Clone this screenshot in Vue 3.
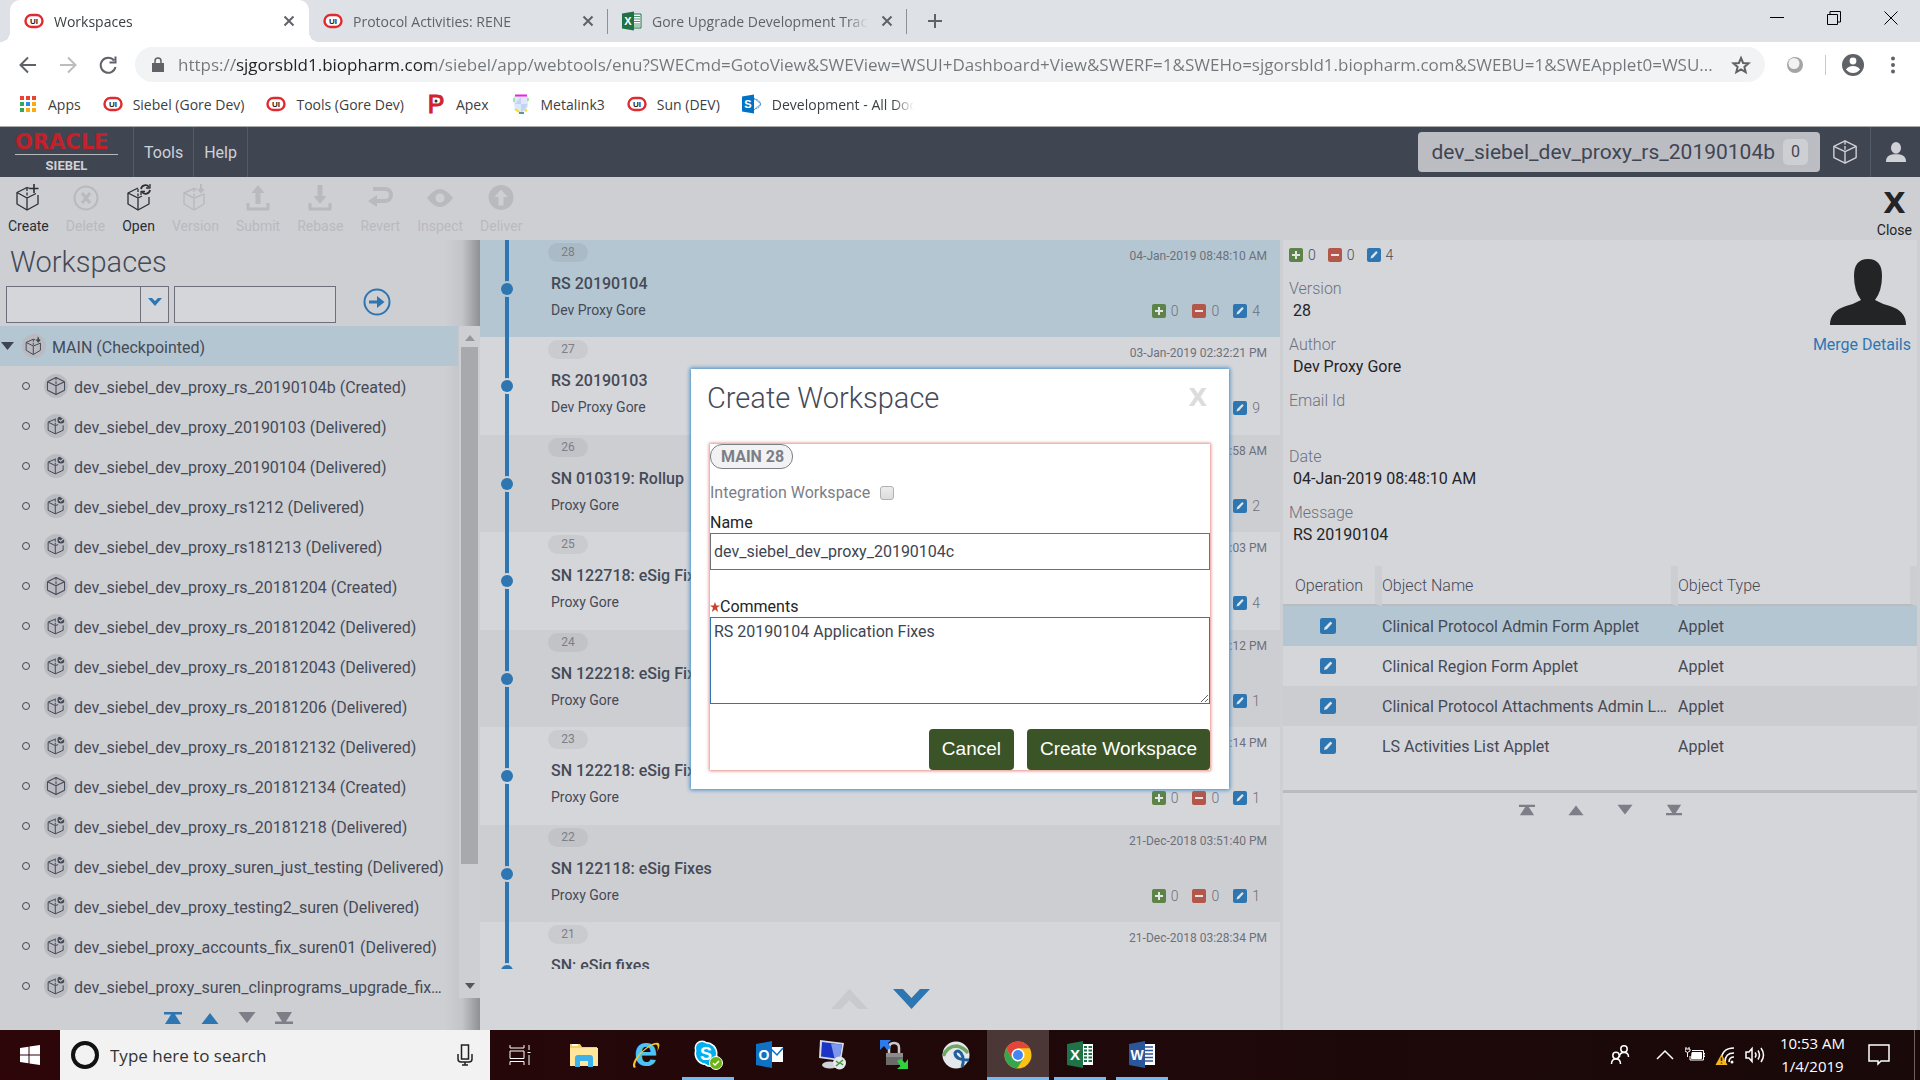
<script setup>
import { ref } from 'vue'

const tabs = [
  { title: 'Workspaces', icon: 'ui', active: true },
  { title: 'Protocol Activities: RENE', icon: 'ui' },
  { title: 'Gore Upgrade Development Tracker', icon: 'sheet' }
]

const bookmarks = [
  { title: 'Apps', icon: 'apps' },
  { title: 'Siebel (Gore Dev)', icon: 'ui' },
  { title: 'Tools (Gore Dev)', icon: 'ui' },
  { title: 'Apex', icon: 'apex' },
  { title: 'Metalink3', icon: 'metalink' },
  { title: 'Sun (DEV)', icon: 'ui' },
  { title: 'Development - All Documents', icon: 'sharepoint' }
]

const url = ref(
  'https://sjgorsbld1.biopharm.com/siebel/app/webtools/enu?SWECmd=GotoView&SWEView=WSUI+Dashboard+View&SWERF=1&SWEHo=sjgorsbld1.biopharm.com&SWEBU=1&SWEApplet0=WSU...'
)

const tools = [
  { label: 'Create', icon: 'cube-plus', enabled: true },
  { label: 'Delete', icon: 'delete' },
  { label: 'Open', icon: 'cube-open', enabled: true },
  { label: 'Version', icon: 'cube-down' },
  { label: 'Submit', icon: 'submit' },
  { label: 'Rebase', icon: 'rebase' },
  { label: 'Revert', icon: 'revert' },
  { label: 'Inspect', icon: 'inspect' },
  { label: 'Deliver', icon: 'deliver' }
]

const workspaces = [
  { name: 'dev_siebel_dev_proxy_rs_20190104b', status: 'Created' },
  { name: 'dev_siebel_dev_proxy_20190103', status: 'Delivered' },
  { name: 'dev_siebel_dev_proxy_20190104', status: 'Delivered' },
  { name: 'dev_siebel_dev_proxy_rs1212', status: 'Delivered' },
  { name: 'dev_siebel_dev_proxy_rs181213', status: 'Delivered' },
  { name: 'dev_siebel_dev_proxy_rs_20181204', status: 'Created' },
  { name: 'dev_siebel_dev_proxy_rs_201812042', status: 'Delivered' },
  { name: 'dev_siebel_dev_proxy_rs_201812043', status: 'Delivered' },
  { name: 'dev_siebel_dev_proxy_rs_20181206', status: 'Delivered' },
  { name: 'dev_siebel_dev_proxy_rs_201812132', status: 'Delivered' },
  { name: 'dev_siebel_dev_proxy_rs_201812134', status: 'Created' },
  { name: 'dev_siebel_dev_proxy_rs_20181218', status: 'Delivered' },
  { name: 'dev_siebel_dev_proxy_suren_just_testing', status: 'Delivered' },
  { name: 'dev_siebel_dev_proxy_testing2_suren', status: 'Delivered' },
  { name: 'dev_siebel_proxy_accounts_fix_suren01', status: 'Delivered' },
  { name: 'dev_siebel_proxy_suren_clinprograms_upgrade_fixes', status: 'Delivered' }
]

const versions = [
  { id: 28, title: 'RS 20190104', author: 'Dev Proxy Gore', date: '04-Jan-2019 08:48:10 AM', edits: 4 },
  { id: 27, title: 'RS 20190103', author: 'Dev Proxy Gore', date: '03-Jan-2019 02:32:21 PM', edits: 9 },
  { id: 26, title: 'SN 010319: Rollup', author: 'Proxy Gore', date: '03-Jan-2019 11:20:58 AM', edits: 2 },
  { id: 25, title: 'SN 122718: eSig Fixes', author: 'Proxy Gore', date: '27-Dec-2018 04:10:03 PM', edits: 4 },
  { id: 24, title: 'SN 122218: eSig Fixes', author: 'Proxy Gore', date: '22-Dec-2018 05:12:12 PM', edits: 1 },
  { id: 23, title: 'SN 122218: eSig Fixes', author: 'Proxy Gore', date: '22-Dec-2018 03:40:14 PM', edits: 1 },
  { id: 22, title: 'SN 122118: eSig Fixes', author: 'Proxy Gore', date: '21-Dec-2018 03:51:40 PM', edits: 1 },
  { id: 21, title: 'SN: eSig fixes', author: 'Proxy Gore', date: '21-Dec-2018 03:28:34 PM', edits: 1 }
]

const details = [
  { label: 'Version', value: '28' },
  { label: 'Author', value: 'Dev Proxy Gore' },
  { label: 'Email Id', value: '' },
  { label: 'Date', value: '04-Jan-2019 08:48:10 AM' },
  { label: 'Message', value: 'RS 20190104' }
]

const objects = [
  { name: 'Clinical Protocol Admin Form Applet', type: 'Applet' },
  { name: 'Clinical Region Form Applet', type: 'Applet' },
  { name: 'Clinical Protocol Attachments Admin List Applet', type: 'Applet' },
  { name: 'LS Activities List Applet', type: 'Applet' }
]

const pagers = ['first', 'prev', 'next', 'last']

const taskbarApps = [
  { icon: 'explorer', label: 'File Explorer' },
  { icon: 'ie', label: 'Internet Explorer' },
  { icon: 'skype', label: 'Skype', running: true },
  { icon: 'outlook', label: 'Outlook' },
  { icon: 'remote', label: 'Remote Desktop' },
  { icon: 'winscp', label: 'WinSCP' },
  { icon: 'anyconnect', label: 'AnyConnect' },
  { icon: 'chrome', label: 'Chrome', running: true, focused: true },
  { icon: 'excel', label: 'Excel', running: true },
  { icon: 'word', label: 'Word', running: true }
]

const workspaceName = ref('dev_siebel_dev_proxy_20190104c')
const comments = ref('RS 20190104 Application Fixes')
const integration = ref(false)
const statusFilter = ref('')
const searchText = ref('')
</script>

<template>
  <div class="desktop">
    <svg class="sprite" aria-hidden="true">
      <defs>
        <symbol id="ui" viewBox="0 0 20 20">
          <rect x="1.500" y="4" width="17" height="12" rx="6" fill="#fff" stroke="#e02a2f" stroke-width="2.400" />
          <text x="10" y="13" font-family="Liberation Sans, sans-serif" font-size="8" font-weight="bold" text-anchor="middle" fill="#222">UI</text>
        </symbol>
        <symbol id="sheet" viewBox="0 0 20 20">
          <path d="M11 3h8v14h-8z" fill="#fff" stroke="#1f7246" />
          <path d="M12 5.500h6M12 8h6M12 10.500h6M12 13h6M12 15h6" stroke="#4d9a70" />
          <path d="M0 2.500L12 0.500v19L0 17.500z" fill="#1f7246" />
          <text x="6" y="14" font-family="Liberation Sans, sans-serif" font-size="11" font-weight="bold" text-anchor="middle" fill="#fff">X</text>
        </symbol>
        <symbol id="apps" viewBox="0 0 20 20">
          <path d="M2 2h4v4H2zM8 2h4v4H8zM14 2h4v4h-4z" fill="#ea4335" />
          <path d="M2 8h4v4H2zM2 14h4v4H2z" fill="#34a853" />
          <path d="M8 8h4v4H8z" fill="#2a8af0" />
          <path d="M14 8h4v4h-4zM8 14h4v4H8zM14 14h4v4h-4z" fill="#fbab0a" />
        </symbol>
        <symbol id="apex" viewBox="0 0 20 20">
          <text x="10" y="19" font-family="Liberation Sans, sans-serif" font-size="25" text-anchor="middle" fill="#d3222a" stroke="#d3222a">P</text>
          <circle cx="10" cy="7" r="1.500" fill="#333" />
        </symbol>
        <symbol id="metalink" viewBox="0 0 20 20">
          <path d="M3 2h14v9q0 5-7 8q-7-3-7-8z" fill="#dfe7fb" />
          <path d="M10 3v7H4M10 10h6q0 5-6 8z" fill="#c3d2f6" />
          <path d="M4 1.500h12" stroke="#ee22dd" stroke-width="2" />
          <path d="M3 4v4M17 4v3" stroke="#8ee08a" stroke-width="1.500" />
          <path d="M4 15l4 3" stroke="#e9e21b" stroke-width="2" />
          <path d="M8 19h5" stroke="#2c6f86" stroke-width="1.500" />
          <path d="M14 17l2-1" stroke="#e9e21b" stroke-width="2" />
        </symbol>
        <symbol id="sharepoint" viewBox="0 0 20 20">
          <circle cx="14" cy="10" r="4.500" fill="none" stroke="#4d9bd8" stroke-dasharray="2 1" />
          <path d="M12 4l7 6l-7 6" fill="none" stroke="#4d9bd8" />
          <path d="M0 2.500L12 0.500v19L0 17.500z" fill="#0072c6" />
          <text x="6" y="14" font-family="Liberation Sans, sans-serif" font-size="11" font-weight="bold" text-anchor="middle" fill="#fff">S</text>
        </symbol>

        <symbol id="cube" viewBox="0 0 28 28">
          <g fill="none" stroke="currentColor" stroke-width="1.500" stroke-linejoin="round">
            <path d="M14 2L26 8V20L14 26L2 20V8z" />
            <path d="M2 8L14 13.500L26 8M14 13.500V26" />
            <path d="M14 2v11" stroke-dasharray="4 1.500" />
          </g>
        </symbol>
        <symbol id="cube-plus" viewBox="0 0 28 28">
          <g fill="none" stroke="currentColor" stroke-width="1.300" stroke-linejoin="round">
            <path d="M16 4.500L13 3.500L3 8.500V20L13 26L24 20V11" />
            <path d="M3 8.500L13 14L22 9.500M13 14V26" />
            <path d="M13 4v10" stroke-dasharray="3 1.500" />
            <path d="M20 0v9M15.500 4.500h9" stroke-width="1.600" />
          </g>
        </symbol>
        <symbol id="cube-open" viewBox="0 0 28 28">
          <g fill="none" stroke="currentColor" stroke-width="1.300" stroke-linejoin="round">
            <path d="M13 4L3 9V20L13 26L24 20V13" />
            <path d="M3 9L13 14L17 12M13 14V26" />
            <path d="M13 5v9" stroke-dasharray="3 1.500" />
            <path d="M16 5a4.500 4.500 0 0 1 8-2M25 6a4.500 4.500 0 0 1-8 2" stroke-width="1.800" />
            <path d="M25 0v4h-4M16 11V7.500h4" />
          </g>
        </symbol>
        <symbol id="cube-down" viewBox="0 0 28 28">
          <g fill="none" stroke="currentColor" stroke-width="1.400" stroke-linejoin="round">
            <path d="M16 5.500L13 4.500L3 9V20L13 26L23 20V10" />
            <path d="M3 9L13 14L23 10M13 14V26" />
            <path d="M13 5v9" stroke-dasharray="3 1.500" />
            <path d="M20 0v8M17.500 5l2.500 3l2.500-3" stroke-width="2" />
          </g>
        </symbol>
        <symbol id="cube-check" viewBox="0 0 28 28">
          <g fill="none" stroke="currentColor" stroke-width="1.400" stroke-linejoin="round">
            <path d="M14 4L3 8.500V20L13 25L24 20V13" />
            <path d="M3 8.500L13 13.500L17 12M13 13.500V25" />
            <path d="M13 5v8" stroke-dasharray="3 1.500" />
          </g>
          <circle cx="21" cy="5.500" r="5" fill="currentColor" />
          <path d="M18.500 5.500l2 2l3.500-3.500" fill="none" stroke="#cfd0d4" stroke-width="1.500" />
        </symbol>
        <symbol id="delete" viewBox="0 0 28 28">
          <circle cx="14" cy="14" r="11.500" fill="none" stroke="currentColor" stroke-width="2" />
          <path d="M10 9l8 10M18 9l-8 10" stroke="currentColor" stroke-width="3" />
        </symbol>
        <symbol id="submit" viewBox="0 0 28 28">
          <path d="M4 19v6h20v-6" fill="none" stroke="currentColor" stroke-width="3" stroke-linejoin="round" />
          <path d="M14 1l6.500 8H16.500v11h-5V9H7.500z" fill="currentColor" />
        </symbol>
        <symbol id="rebase" viewBox="0 0 28 28">
          <path d="M4 19v6h20v-6" fill="none" stroke="currentColor" stroke-width="3" stroke-linejoin="round" />
          <path d="M14 20l6.500-8H16.500V1h-5v11H7.500z" fill="currentColor" />
        </symbol>
        <symbol id="revert" viewBox="0 0 28 28">
          <path d="M7 5h12a5 5 0 0 1 0 12h-9" fill="none" stroke="currentColor" stroke-width="4" />
          <path d="M2 17l9-6v12z" fill="currentColor" />
        </symbol>
        <symbol id="inspect" viewBox="0 0 28 28">
          <path d="M1 14Q8 5 14 5T27 14Q20 23 14 23T1 14zM14 9.500a4.500 4.500 0 1 0 0.100 0z" fill="currentColor" fill-rule="evenodd" />
        </symbol>
        <symbol id="deliver" viewBox="0 0 28 28">
          <path d="M14 1a12.500 12.500 0 1 0 0.100 0zM14 5.500l6.500 7.500h-4v8.500h-5V13h-4z" fill="currentColor" fill-rule="evenodd" />
        </symbol>
        <symbol id="user" viewBox="0 0 24 24">
          <ellipse cx="12" cy="7.500" rx="5.500" ry="6.500" fill="currentColor" />
          <path d="M1 23q0-8 8-8.500h6q8 .5 8 8.500z" fill="currentColor" />
        </symbol>

        <symbol id="added" viewBox="0 0 14 14">
          <rect width="14" height="14" rx="2" fill="#5e8348" />
          <path d="M7 3v8M3 7h8" stroke="#e4e6e6" stroke-width="2" />
        </symbol>
        <symbol id="removed" viewBox="0 0 14 14">
          <rect width="14" height="14" rx="2" fill="#b4574b" />
          <path d="M3 7h8" stroke="#e8e2e2" stroke-width="2" />
        </symbol>
        <symbol id="edited" viewBox="0 0 14 14">
          <rect width="14" height="14" rx="2" fill="#2d76b2" />
          <path d="M3.500 10.500l.7-2.500l5-5l1.500 1.500l-4.700 5.300z" fill="#dfe4e8" />
        </symbol>

        <symbol id="first" viewBox="0 0 18 12">
          <path d="M0 0h18v2.500h-7l6 9.500H1l6-9.500H0z" fill="currentColor" />
        </symbol>
        <symbol id="prev" viewBox="0 0 18 12">
          <path d="M9 1l8.500 11h-17z" fill="currentColor" />
        </symbol>
        <symbol id="next" viewBox="0 0 18 12">
          <path d="M9 11L17.500 0h-17z" fill="currentColor" />
        </symbol>
        <symbol id="last" viewBox="0 0 18 12">
          <path d="M1 0h16l-6 9.500h7V12H0V9.500h7z" fill="currentColor" />
        </symbol>

        <symbol id="explorer" viewBox="0 0 30 30">
          <path d="M1 4h10l2 3h15v19H1z" fill="#f5cf62" />
          <path d="M1 8h28v18H1z" fill="#ffe69a" />
          <path d="M3 4h6v2H3z" fill="#fff" />
          <path d="M6 27V18q0-3 3-3h12q3 0 3 3v9h-5v-6h-8v6z" fill="#3db2ea" />
        </symbol>
        <symbol id="ie" viewBox="0 0 30 30">
          <text x="15" y="26" font-family="Liberation Sans, sans-serif" font-size="42" font-weight="bold" text-anchor="middle" fill="#4cc3f3">e</text>
          <path d="M3 28q-4-5 7-16Q22 1 27.500 3Q30 5 26 12Q28 5 25 4.500Q18 5 9 15Q2 25 5 27z" fill="#f6c52c" />
        </symbol>
        <symbol id="skype" viewBox="0 0 30 30">
          <circle cx="9" cy="8" r="7.500" fill="#fff" />
          <circle cx="17" cy="19" r="8" fill="#fff" />
          <circle cx="13" cy="13.500" r="11.500" fill="#fff" />
          <circle cx="9" cy="8" r="6" fill="#00aff0" />
          <circle cx="17" cy="19" r="6.500" fill="#00aff0" />
          <circle cx="13" cy="13.500" r="10" fill="#00aff0" />
          <text x="13" y="20" font-family="Liberation Sans, sans-serif" font-size="18" font-weight="bold" text-anchor="middle" fill="#fff">S</text>
          <circle cx="23" cy="23" r="6.500" fill="#6bb313" stroke="#fff" />
          <path d="M20 23l2 2l4-4" fill="none" stroke="#fff" stroke-width="1.500" />
        </symbol>
        <symbol id="outlook" viewBox="0 0 30 30">
          <path d="M16 7h12v15H16z" fill="#fff" />
          <path d="M16 9l6 6l6-7" fill="none" stroke="#0072c6" stroke-width="1.500" />
          <path d="M1 4l16-3v27L1 25z" fill="#0f72c4" />
          <text x="9" y="20" font-family="Liberation Sans, sans-serif" font-size="14" font-weight="bold" text-anchor="middle" fill="#fff">O</text>
        </symbol>
        <symbol id="remote" viewBox="0 0 30 30">
          <path d="M3 0l24 3l-3 18l-22-3z" fill="#d8dbe2" />
          <path d="M5 2l20 2.500l-2.500 14.500L4 16.500z" fill="#1b35c4" />
          <path d="M14 3.500l11 1L22.500 19l-5-.500z" fill="#7d98ec" />
          <ellipse cx="13" cy="25" rx="8" ry="3.500" fill="#cfd2d8" />
          <circle cx="22.500" cy="23" r="6.500" fill="#e5e7ea" />
          <path d="M19 21l3 2.500l-3 2.500M26 20l-3 2.500l3 2.500" fill="none" stroke="#3e9b3a" stroke-width="1.500" />
        </symbol>
        <symbol id="winscp" viewBox="0 0 30 30">
          <path d="M10 14V8q0-5 5-5t5 5v6" fill="none" stroke="#c9c9c9" stroke-width="2.500" />
          <path d="M7 13h17v12H7z" fill="#6b6b6b" />
          <path d="M7 13h17v4H7z" fill="#8c8c8c" />
          <path d="M1 0h11L9 3l3 5l-4 2l-3-4l-4 4z" fill="#2c7be8" />
          <path d="M29 29H18l3.500-3L18 21l4-2l4 4l3-4z" fill="#2fd23c" />
        </symbol>
        <symbol id="anyconnect" viewBox="0 0 30 30">
          <circle cx="15" cy="15" r="13.500" fill="#e4e8ea" />
          <path d="M2.500 16Q6 6 16 6q6 1 11 7" fill="none" stroke="#6fa663" stroke-width="3.500" />
          <path d="M28 20Q14 20 14 13q2-4 6 0q4 6 1 14" fill="none" stroke="#1f5f9c" stroke-width="3" />
        </symbol>
        <symbol id="chrome" viewBox="0 0 30 30">
          <circle cx="15" cy="15" r="13.500" fill="#fbc116" />
          <path d="M3.300 8.300A13.500 13.500 0 0 1 26.700 8.300H15L9 18.500z" fill="#e5443a" />
          <path d="M3.300 8.300A13.500 13.500 0 0 0 14 28.500L20.500 18.500L15 15L9 18.500z" fill="#35a551" />
          <circle cx="15" cy="15" r="6.500" fill="#fff" />
          <circle cx="15" cy="15" r="5" fill="#4285f4" />
        </symbol>
        <symbol id="excel" viewBox="0 0 30 30">
          <path d="M14 4h14v21H14z" fill="#fff" />
          <path d="M19 7h3M23.500 7H27M19 10.500h3M23.500 10.500H27M19 14h3M23.500 14H27M19 17.500h3M23.500 17.500H27M19 21h3M23.500 21H27" stroke="#1f7246" stroke-width="2" />
          <path d="M2 4l16-3v27L2 25z" fill="#1f7246" />
          <text x="10" y="20" font-family="Liberation Sans, sans-serif" font-size="15" font-weight="bold" text-anchor="middle" fill="#fff">X</text>
        </symbol>
        <symbol id="word" viewBox="0 0 30 30">
          <path d="M14 4h14v21H14z" fill="#fff" />
          <path d="M18 7h8M18 10.500h8M18 14h8M18 17.500h8M18 21h8" stroke="#2b579a" stroke-width="1.500" />
          <path d="M2 4l16-3v27L2 25z" fill="#2b579a" />
          <text x="10" y="20" font-family="Liberation Sans, sans-serif" font-size="14" font-weight="bold" text-anchor="middle" fill="#fff">W</text>
        </symbol>
      </defs>
    </svg>

    <header class="browser">
      <div class="tab-strip">
        <div v-for="tab in tabs" :key="tab.title" class="tab" :class="{ active: tab.active }">
          <svg class="favicon"><use :href="'#' + tab.icon" /></svg>
          <span class="tab-title">{{ tab.title }}</span>
          <button class="tab-close" aria-label="Close tab">
            <svg viewBox="0 0 12 12"><path d="M1.500 1.500l9 9M10.500 1.500l-9 9" /></svg>
          </button>
        </div>
        <button class="new-tab" aria-label="New tab">
          <svg viewBox="0 0 16 16"><path d="M8 1v14M1 8h14" /></svg>
        </button>
        <div class="window-buttons">
          <button aria-label="Minimize"><svg viewBox="0 0 14 14"><path d="M0 6.500h14" /></svg></button>
          <button aria-label="Restore"><svg viewBox="0 0 14 14"><path d="M.5 3.500h10v10H.5zM3 3V.500h10.500V11H11" /></svg></button>
          <button aria-label="Close"><svg viewBox="0 0 14 14"><path d="M.5 .5l13 13M13.500 .5l-13 13" /></svg></button>
        </div>
      </div>

      <div class="address-row">
        <button class="nav-button" aria-label="Back">
          <svg viewBox="0 0 20 20"><path d="M18 10H3M10 2.500L2.500 10L10 17.500" /></svg>
        </button>
        <button class="nav-button muted" aria-label="Forward">
          <svg viewBox="0 0 20 20"><path d="M2 10h15M10 2.500l7.500 7.500l-7.500 7.500" /></svg>
        </button>
        <button class="nav-button" aria-label="Reload">
          <svg viewBox="0 0 20 20"><path d="M16 5.500A7.500 7.500 0 1 0 17.500 12M17.500 1.500v6h-6" /></svg>
        </button>
        <div class="address">
          <svg class="lock" viewBox="0 0 12 16">
            <path d="M0 6h12v9H0z" fill="#5f6368" />
            <path d="M3 7V4q0-3 3-3t3 3v3" fill="none" stroke="#5f6368" stroke-width="1.500" />
          </svg>
          <input v-model="url" class="url" type="text" aria-label="Address" />
          <svg class="star" viewBox="0 0 20 20">
            <path d="M10 3l2.100 5l5.400 .4l-4.100 3.500l1.300 5.200L10 14.300l-4.700 2.800l1.300-5.200L2.500 8.400l5.400-.4z" />
          </svg>
        </div>
        <svg class="extension" viewBox="0 0 20 20">
          <circle cx="10" cy="10" r="8" fill="#a4a4a4" />
          <circle cx="9" cy="8.500" r="5.500" fill="#f2f2f2" />
        </svg>
        <span class="rule"></span>
        <button class="nav-button" aria-label="Profile">
          <svg class="avatar" viewBox="0 0 22 22">
            <circle cx="11" cy="11" r="11" fill="#5f6368" />
            <circle cx="11" cy="7" r="3.400" fill="#fff" />
            <path d="M4 15.500q2-3.500 7-3.500t7 3.500q-3 3.500-7 3.500t-7-3.500z" fill="#fff" />
          </svg>
        </button>
        <button class="nav-button" aria-label="Menu">
          <svg class="dots" viewBox="0 0 20 20">
            <circle cx="10" cy="3.500" r="2" /><circle cx="10" cy="10" r="2" /><circle cx="10" cy="16.500" r="2" />
          </svg>
        </button>
      </div>

      <nav class="bookmarks">
        <a v-for="mark in bookmarks" :key="mark.title" href="#">
          <svg class="favicon"><use :href="'#' + mark.icon" /></svg>
          <span>{{ mark.title }}</span>
        </a>
      </nav>
    </header>

    <div class="siebel">
      <div class="banner">
        <div class="logo">
          <span class="oracle">ORACLE</span>
          <span class="product">SIEBEL</span>
        </div>
        <button class="menu">Tools</button>
        <button class="menu">Help</button>
        <div class="banner-right">
          <span class="current">dev_siebel_dev_proxy_rs_20190104b <b>0</b></span>
          <button class="banner-icon" aria-label="Workspace"><svg><use href="#cube" /></svg></button>
          <button class="banner-icon user" aria-label="User"><svg><use href="#user" /></svg></button>
        </div>
      </div>

      <div class="toolbar">
        <button v-for="tool in tools" :key="tool.label" :disabled="!tool.enabled">
          <svg><use :href="'#' + tool.icon" /></svg>
          {{ tool.label }}
        </button>
        <button class="close-view"><b>X</b>Close</button>
      </div>

      <main class="columns">
        <section class="explorer">
          <h1>Workspaces</h1>
          <div class="query">
            <div class="combo">
              <input v-model="statusFilter" type="text" aria-label="Field" />
              <button aria-label="Show fields">
                <svg viewBox="0 0 16 10"><path d="M1 1h4l3 3l3-3h4L8 9z" fill="#2d76b2" /></svg>
              </button>
            </div>
            <input v-model="searchText" class="search-value" type="text" aria-label="Value" />
            <button class="go" aria-label="Go">
              <svg viewBox="0 0 28 28">
                <circle cx="14" cy="14" r="12.500" fill="none" stroke="#2d76b2" stroke-width="2" />
                <path d="M6 12.500h8V8l7.500 6l-7.500 6v-4.500H6z" fill="#2d76b2" />
              </svg>
            </button>
          </div>
          <div class="tree-wrap">
            <ul class="tree">
              <li class="root">
                <svg class="caret" viewBox="0 0 13 8"><path d="M0 0h13L6.500 8z" fill="#404552" /></svg>
                <svg class="badge"><use href="#cube-down" /></svg>
                <span class="name">MAIN (Checkpointed)</span>
              </li>
              <li v-for="item in workspaces" :key="item.name">
                <span class="bullet"></span>
                <svg class="badge"><use :href="item.status === 'Created' ? '#cube' : '#cube-check'" /></svg>
                <span class="name">{{ item.name }} ({{ item.status }})</span>
              </li>
            </ul>
            <div class="scrollbar">
              <svg viewBox="0 0 10 6"><path d="M5 0l5 6H0z" fill="#96979a" /></svg>
              <div class="track"><div class="thumb"></div></div>
              <svg viewBox="0 0 10 6"><path d="M5 6l5-6H0z" fill="#55565a" /></svg>
            </div>
          </div>
          <div class="pager tree-pager">
            <button v-for="(pager, i) in pagers" :key="pager" :class="{ on: i < 2 }" :aria-label="pager">
              <svg><use :href="'#' + pager" /></svg>
            </button>
          </div>
        </section>

        <section class="history">
          <ol class="timeline">
            <li v-for="(version, i) in versions" :key="version.id" :class="{ selected: i === 0 }">
              <div class="entry">
                <span class="number">{{ version.id }}</span>
                <h2>{{ version.title }}</h2>
                <p>{{ version.author }}</p>
              </div>
              <div class="stamp">
                <time>{{ version.date }}</time>
                <div class="counts">
                  <svg><use href="#added" /></svg><span>0</span>
                  <svg><use href="#removed" /></svg><span>0</span>
                  <svg><use href="#edited" /></svg><span>{{ version.edits }}</span>
                </div>
              </div>
            </li>
          </ol>
          <div class="steps">
            <button aria-label="Newer"><svg viewBox="0 0 37 20"><path d="M0 20L18.500 0L37 20H27L18.500 11L10 20z" fill="#c9cace" /></svg></button>
            <button aria-label="Older"><svg viewBox="0 0 37 20"><path d="M0 0L18.500 20L37 0H27L18.500 9L10 0z" fill="#2d76b2" /></svg></button>
          </div>
        </section>

        <section class="details">
          <div class="summary">
            <div>
              <div class="counts">
                <svg><use href="#added" /></svg><span>0</span>
                <svg><use href="#removed" /></svg><span>0</span>
                <svg><use href="#edited" /></svg><span>4</span>
              </div>
              <dl>
                <template v-for="row in details" :key="row.label">
                  <dt>{{ row.label }}</dt>
                  <dd>{{ row.value }}</dd>
                </template>
              </dl>
            </div>
            <div class="person">
              <svg viewBox="0 0 76 66">
                <path d="M38 0Q52 0 52 17Q52 32 45 41Q52 45 60 47Q76 52 76 66H0Q0 52 16 47Q24 45 31 41Q24 32 24 17Q24 0 38 0z" fill="#232426" />
              </svg>
              <a href="#">Merge Details</a>
            </div>
          </div>
          <table>
            <thead>
              <tr><th class="operation">Operation</th><th class="object">Object Name</th><th>Object Type</th></tr>
            </thead>
            <tbody>
              <tr v-for="object in objects" :key="object.name">
                <td><svg><use href="#edited" /></svg></td>
                <td>{{ object.name }}</td>
                <td>{{ object.type }}</td>
              </tr>
            </tbody>
          </table>
          <div class="pager table-pager">
            <button v-for="pager in pagers" :key="pager" :aria-label="pager">
              <svg><use :href="'#' + pager" /></svg>
            </button>
          </div>
        </section>
      </main>

      <div class="overlay">
        <div class="dialog" role="dialog" aria-labelledby="dialog-title">
          <div class="dialog-head">
            <h2 id="dialog-title">Create Workspace</h2>
            <button aria-label="Close dialog">X</button>
          </div>
          <form @submit.prevent>
            <span class="parent">MAIN 28</span>
            <div class="check-row">
              <label for="integration">Integration Workspace</label>
              <input id="integration" v-model="integration" type="checkbox" />
            </div>
            <label for="name">Name</label>
            <input id="name" v-model="workspaceName" type="text" />
            <label class="required" for="comments">
              <svg viewBox="0 0 10 10"><path d="M5 0l1.300 3.500H10L7 5.800L8.200 10L5 7.500L1.800 10L3 5.800L0 3.500h3.700z" fill="#c8432f" /></svg>Comments
            </label>
            <textarea id="comments" v-model="comments"></textarea>
            <div class="actions">
              <button type="button">Cancel</button>
              <button type="submit">Create Workspace</button>
            </div>
          </form>
        </div>
      </div>
    </div>

    <footer class="taskbar">
      <button class="start" aria-label="Start">
        <svg viewBox="0 0 20 20"><path d="M0 3l8.500-1.200v7.700H0zM9.500 1.600L20 0v9.500H9.500zM0 10.500h8.500v7.700L0 17zM9.500 10.500H20V20L9.500 18.400z" fill="#fff" /></svg>
      </button>
      <div class="cortana">
        <span class="ring"></span>
        <input type="text" placeholder="Type here to search" aria-label="Search" />
        <svg viewBox="0 0 16 22">
          <path d="M4.500 1h7v14h-7zM1 10v5q0 3 3 3h8q3 0 3-3v-5M8 18v3M5 21h6" fill="none" stroke="#222" stroke-width="1.500" />
        </svg>
      </div>
      <button class="task-view" aria-label="Task View">
        <svg viewBox="0 0 22 20"><path d="M1 0v3h14V0M1 20v-3.500h14V20M1 6h14v7.500H1zM20 0v5M20 10v10M18.500 7.500h3" /></svg>
      </button>
      <button
        v-for="app in taskbarApps"
        :key="app.icon"
        class="app"
        :class="{ running: app.running, focused: app.focused }"
        :aria-label="app.label"
      >
        <svg><use :href="'#' + app.icon" /></svg>
      </button>
      <div class="tray">
        <svg class="people" viewBox="0 0 20 20">
          <circle cx="14" cy="4" r="3.200" /><path d="M9.500 12q0-4.500 4.500-4.500t4.500 4.500" />
          <circle cx="6" cy="10.500" r="3.200" /><path d="M1.500 19q0-5 4.500-5t4.500 5" />
        </svg>
        <svg viewBox="0 0 20 20"><path d="M2 14l8-8l8 8" /></svg>
        <svg class="battery" viewBox="0 0 20 20">
          <path d="M7 7.500h9.500v6H6.500z" fill="#fff" /><path d="M7 5.500h11.500v9.500H5V11M18.500 8.500h1.500v3h-1.500M0 4h5v2q-2.500 3-5 0zM1 2v2M4 2v2M2.500 7.500V12" />
        </svg>
        <svg viewBox="0 0 20 20">
          <path d="M6 17Q6 3 19 3M10 17q0-9 9-9M14 17q0-5 5-5" /><circle cx="17" cy="17" r="1.500" fill="#fff" stroke="none" />
          <path d="M6.500 9l6 11H.5z" fill="#f7b516" stroke="none" /><path d="M6.500 12.500v3.500M6.500 17.500v1" stroke="#222" />
        </svg>
        <svg viewBox="0 0 20 20"><path d="M1 7h3l3-3.500v13L4 13H1zM10 7.500q2 2.500 0 5M13 5.500q3 4.500 0 9M16 3q5 7 0 14" /></svg>
        <div class="clock"><span>10:53 AM</span><span>1/4/2019</span></div>
        <svg class="notes" viewBox="0 0 22 22"><path d="M1 1h20v16h-8l-3 3v-3H1z" /></svg>
      </div>
    </footer>
  </div>
</template>

<style>
body {
  margin: 0;
}
</style>

<style scoped>
* {
  box-sizing: border-box;
}

.desktop {
  display: flex;
  flex-direction: column;
  height: 100vh;
  overflow: hidden;
  font-family: Roboto, 'Liberation Sans', sans-serif;
  font-size: 16px;
  color: #454a57;
}

.sprite {
  position: absolute;
  width: 0;
  height: 0;
}

button {
  padding: 0;
  border: 0;
  background: none;
  font: inherit;
  color: inherit;
}

h1,
h2,
p,
ul,
ol,
dl,
dd {
  margin: 0;
  padding: 0;
  list-style: none;
}

svg {
  display: block;
  flex: none;
}

/* browser */
.browser,
.taskbar {
  flex: none;
  font-family: 'Open Sans', 'Noto Sans', sans-serif;
}

.tab-strip {
  display: flex;
  height: 42px;
  padding-left: 10px;
  background: #dee1e6;
  font-size: 14px;
}

.tab {
  position: relative;
  display: flex;
  align-items: center;
  gap: 10px;
  width: 299px;
  padding: 0 11px 0 14px;
  color: #5f6368;
}

.tab::after {
  content: '';
  position: absolute;
  right: 0;
  width: 1px;
  height: 25px;
  background: #8d9196;
}

.tab.active {
  border-radius: 10px 10px 0 0;
  background: #fff;
  color: #3c4043;
}

.tab.active::before,
.tab.active::after {
  content: '';
  position: absolute;
  bottom: 0;
  width: 10px;
  height: 10px;
}

.tab.active::before {
  left: -10px;
  background: radial-gradient(circle at 0 0, transparent 10px, #fff 10px);
}

.tab.active::after {
  right: -10px;
  background: radial-gradient(circle at 100% 0, transparent 10px, #fff 10px);
}

.favicon {
  width: 20px;
  height: 20px;
}

.tab-title {
  flex: 1;
  overflow: hidden;
  white-space: nowrap;
  mask-image: linear-gradient(to right, #000 90%, transparent);
}

.tab-close {
  display: grid;
  place-items: center;
  width: 18px;
  height: 18px;
}

.tab-close svg {
  width: 12px;
  height: 12px;
  stroke: #5f6368;
  stroke-width: 2;
}

.new-tab {
  width: 56px;
  display: grid;
  place-items: center;
}

.new-tab svg {
  width: 16px;
  height: 16px;
  stroke: #5f6368;
  stroke-width: 2;
}

.window-buttons {
  display: flex;
  height: 36px;
  margin: 0 1px 0 auto;
}

.window-buttons button {
  display: grid;
  place-items: center;
  width: 57px;
}

.window-buttons svg {
  width: 14px;
  height: 14px;
  fill: none;
  stroke: #000;
}

.address-row {
  display: flex;
  align-items: center;
  height: 45px;
  padding: 0 7px 0 8px;
  background: #fff;
}

.nav-button {
  display: grid;
  place-items: center;
  width: 40px;
  height: 40px;
}

.nav-button svg {
  width: 20px;
  height: 20px;
  fill: none;
  stroke: #5f6368;
  stroke-width: 2;
}

.nav-button.muted svg {
  stroke: #babcbe;
}

.nav-button .avatar {
  width: 22px;
  height: 22px;
  stroke: none;
}

.nav-button .dots {
  fill: #5f6368;
  stroke: none;
}

.address {
  display: flex;
  align-items: center;
  flex: 1;
  height: 35px;
  margin-left: 7px;
  padding: 0 14px 0 17px;
  border-radius: 18px;
  background: #f1f3f4;
}

.lock {
  width: 12px;
  height: 16px;
}

.url {
  flex: 1;
  min-width: 0;
  height: 30px;
  margin: 0 12px 0 14px;
  padding: 0;
  border: 0;
  outline: 0;
  font: inherit;
  font-size: 17px;
  color: transparent;
  background: linear-gradient(to right, #72777c 57px, #202124 57px, #202124 254px, #72777c 254px);
  background-clip: text;
}

.star {
  width: 20px;
  height: 20px;
  fill: none;
  stroke: #5f6368;
  stroke-width: 2;
}

.extension {
  width: 20px;
  height: 20px;
  margin-left: 20px;
}

.rule {
  width: 1px;
  height: 20px;
  margin: 0 7px 0 20px;
  background: #c8cacd;
}

.bookmarks {
  display: flex;
  align-items: center;
  gap: 22px;
  height: 40px;
  padding: 0 18px 5px;
  border-bottom: 1px solid #a9abad;
  background: #fff;
  font-size: 14px;
}

.bookmarks a {
  display: flex;
  align-items: center;
  gap: 10px;
  color: #3c4043;
  text-decoration: none;
}

.bookmarks a:last-child span {
  width: 142px;
  overflow: hidden;
  white-space: nowrap;
  mask-image: linear-gradient(to right, #000 85%, transparent);
}

/* application */
.siebel {
  position: relative;
  display: flex;
  flex-direction: column;
  flex: 1;
  min-height: 0;
  background: #cecfd3;
}

.banner {
  display: flex;
  flex: none;
  height: 50px;
  background: #404552;
  color: #d0d1d6;
}

.logo {
  display: flex;
  flex-direction: column;
  width: 134px;
  padding: 4px 15px 0;
  border-right: 1px solid #545966;
}

.oracle {
  height: 24px;
  border-bottom: 1px solid #b8b9bd;
  font: bold 21px/22px 'DejaVu Sans', sans-serif;
  color: #c4202a;
}

.product {
  font-size: 13px;
  font-weight: 700;
  line-height: 22px;
  text-align: center;
}

.menu {
  padding: 0 10px;
  border-right: 1px solid #545966;
}

.banner-right {
  display: flex;
  align-items: center;
  margin-left: auto;
}

.current {
  display: flex;
  align-items: center;
  gap: 8px;
  height: 40px;
  padding: 0 12px 0 13px;
  border-radius: 4px;
  background: #bcbdc2;
  color: #404552;
  font-size: 21px;
}

.current b {
  width: 25px;
  border-radius: 5px;
  background: #cecfd3;
  font-size: 16px;
  font-weight: 400;
  line-height: 26px;
  text-align: center;
}

.banner-icon {
  display: grid;
  place-items: center;
  width: 50px;
  height: 50px;
}

.banner-icon svg {
  width: 26px;
  height: 26px;
}

.banner-icon.user {
  border-left: 1px solid #545966;
}

.banner-icon.user svg {
  width: 22px;
  height: 22px;
}

.toolbar {
  display: flex;
  flex: none;
  gap: 17px;
  height: 63px;
  padding: 7px 8px 0;
  font-size: 14px;
  line-height: 20px;
}

.toolbar button {
  display: flex;
  flex-direction: column;
  align-items: center;
  gap: 4px;
  height: 54px;
  color: #2b2e36;
}

.toolbar button:disabled {
  color: #b9babe;
}

.toolbar svg {
  width: 28px;
  height: 28px;
}

.toolbar .close-view {
  gap: 2px;
  margin-left: auto;
  padding-top: 4px;
  color: #232426;
}

.close-view b {
  font: bold 29px/30px 'DejaVu Sans', sans-serif;
}

.columns {
  display: grid;
  grid-template-columns: 25% 800px 1fr;
  flex: 1;
  min-height: 0;
}

.explorer {
  display: flex;
  flex-direction: column;
  min-width: 0;
  min-height: 0;
  background: linear-gradient(to left, #8f9093, #c4c5c8 18px, #cecfd3 36px);
}

.explorer h1 {
  padding-left: 10px;
  font-size: 29px;
  font-weight: 300;
  line-height: 44px;
}

.query {
  display: flex;
  align-items: center;
  height: 42px;
  padding: 0 0 2px 6px;
}

.combo {
  display: flex;
  width: 163px;
  height: 37px;
  border: 1px solid #6d707c;
}

.query input {
  border: 0;
  background: #d5d6da;
}

.combo input {
  flex: 1;
  min-width: 0;
}

.combo button {
  display: grid;
  place-items: center;
  width: 28px;
  padding-bottom: 4px;
  border-left: 1px solid #6d707c;
  background: #d5d6da;
}

.combo svg {
  width: 16px;
  height: 10px;
}

.query .search-value {
  width: 162px;
  height: 37px;
  margin-left: 5px;
  border: 1px solid #6d707c;
}

.go {
  margin-left: 27px;
  padding-bottom: 4px;
}

.go svg {
  width: 28px;
  height: 28px;
}

.tree-wrap {
  display: flex;
  flex: 1;
  min-height: 0;
}

.tree {
  flex: 1;
  min-width: 0;
  overflow: hidden;
}

.tree li {
  display: flex;
  align-items: center;
  height: 40px;
  padding-right: 14px;
}

.tree .root {
  margin-right: 1px;
  padding-left: 1px;
  background: #b4c6d1;
}

.caret {
  width: 13px;
  height: 8px;
  margin-right: 8px;
}

.bullet {
  width: 8px;
  height: 8px;
  margin: 0 14px 0 22px;
  border: 1px solid #404552;
  border-radius: 50%;
}

.badge {
  width: 24px;
  height: 24px;
  margin-right: 6px;
  padding: 2px;
  border-radius: 50%;
  background: #babbc0;
}

.name {
  flex: 1;
  padding-top: 2px;
  overflow: hidden;
  text-overflow: ellipsis;
  white-space: nowrap;
}

.scrollbar {
  display: flex;
  flex-direction: column;
  align-items: center;
  width: 21px;
  padding: 9px 0;
  background: #cecfd3;
}

.scrollbar svg {
  width: 10px;
  height: 6px;
}

.track {
  flex: 1;
  width: 17px;
  padding: 6px 0;
}

.thumb {
  height: 82%;
  background: #a8a9ad;
}

.pager {
  display: flex;
  align-items: center;
  color: #7c7e88;
}

.pager .on {
  color: #2d76b2;
}

.pager svg {
  width: 18px;
  height: 12px;
}

.tree-pager {
  gap: 19px;
  height: 32px;
  padding: 8px 0 0 164px;
}

.history {
  display: flex;
  flex-direction: column;
  min-height: 0;
  background: #d5d6da;
}

.timeline {
  flex: 1;
  overflow: hidden;
}

.timeline li {
  --row: #d5d6da;
  position: relative;
  display: flex;
  justify-content: space-between;
  height: 98px;
  padding: 3px 13px 0 71px;
  background: var(--row);
}

.timeline li:nth-child(odd) {
  --row: #cdced2;
  height: 97px;
}

.timeline li.selected {
  --row: #b4c6d1;
}

.timeline li::before {
  content: '';
  position: absolute;
  top: 0;
  bottom: 0;
  left: 25px;
  width: 4px;
  background: #2d76b2;
}

.timeline li::after {
  content: '';
  position: absolute;
  top: 43px;
  left: 21px;
  width: 12px;
  height: 12px;
  border-radius: 50%;
  background: #2d76b2;
  box-shadow: 0 0 0 2px var(--row);
}

.number {
  display: block;
  width: 40px;
  margin-left: -3px;
  border-radius: 10px;
  background: rgba(0, 0, 0, 0.05);
  font-size: 12px;
  line-height: 19px;
  text-align: center;
  color: #7c7e88;
}

.entry h2 {
  margin-top: 10px;
  font-size: 16px;
  font-weight: 500;
  line-height: 24px;
}

.entry p {
  margin-top: 2px;
  font-size: 14px;
  line-height: 24px;
}

.stamp {
  color: #6d707c;
}

.stamp time {
  display: block;
  padding-top: 1px;
  font-size: 12px;
  line-height: 24px;
}

.stamp .counts {
  justify-content: flex-end;
  margin: 31px 7px 0 0;
}

.counts {
  display: flex;
  align-items: center;
  height: 24px;
  font-size: 14px;
  font-weight: 300;
}

.counts svg {
  width: 14px;
  height: 14px;
  margin-right: 5px;
}

.counts span + svg {
  margin-left: 14px;
}

.summary .counts span + svg {
  margin-left: 12px;
}

.steps {
  display: flex;
  justify-content: center;
  gap: 25px;
  height: 61px;
  padding-top: 20px;
}

.steps button {
  height: 20px;
}

.steps svg {
  width: 37px;
  height: 20px;
}

.details {
  min-width: 0;
  margin: 0 3px;
  background: #d5d6da;
}

.summary {
  display: flex;
  justify-content: space-between;
  padding: 3px 6px 0;
}

dl {
  margin: 11px 0 20px;
  line-height: 22px;
}

dt {
  color: #6d707c;
  font-weight: 300;
}

dd {
  height: 22px;
  margin-bottom: 12px;
  padding-left: 4px;
  color: #232426;
}

dd:last-child {
  margin-bottom: 0;
}

.person {
  display: flex;
  flex-direction: column;
  align-items: flex-end;
  gap: 9px;
  padding-top: 16px;
}

.person svg {
  width: 76px;
  height: 66px;
  margin-right: 5px;
}

.person a {
  line-height: 22px;
  color: #2d76b2;
  text-decoration: none;
}

table {
  width: 100%;
  border-spacing: 0;
  table-layout: fixed;
}

th {
  height: 40px;
  padding: 0;
  border-right: 7px solid #cdced2;
  border-bottom: 2px solid #b9bbbf;
  font-weight: 300;
  text-align: left;
}

.operation {
  width: 99px;
  text-align: center;
}

.object {
  width: 296px;
}

td {
  height: 40px;
  padding: 0 10px 0 0;
  overflow: hidden;
  text-overflow: ellipsis;
  white-space: nowrap;
}

td svg {
  width: 16px;
  height: 16px;
  margin: 0 auto;
}

tbody tr:nth-child(odd) {
  background: #cccdd1;
}

tbody tr:first-child {
  background: #b4c6d1;
}

.table-pager {
  justify-content: center;
  gap: 33px;
  margin-top: 24px;
  padding-top: 11px;
  border-top: 3px solid #b9bbbf;
}

.table-pager svg {
  width: 16px;
}

/* dialog */
.overlay {
  position: absolute;
  inset: 0;
  display: flex;
  align-items: center;
  justify-content: center;
}

.dialog {
  width: 538px;
  padding-bottom: 19px;
  background: #fff;
  box-shadow: 0 0 4px 1px #3d8cc9;
}

.dialog-head {
  display: flex;
  align-items: center;
  justify-content: space-between;
  height: 58px;
  margin-bottom: 17px;
  padding: 0 22px 0 16px;
}

.dialog-head h2 {
  font-size: 29px;
  font-weight: 300;
}

.dialog-head button {
  font: bold 24px/28px 'DejaVu Sans', sans-serif;
  color: #dcdcdc;
}

form {
  display: flex;
  flex-direction: column;
  margin: 0 19px;
  box-shadow: 0 0 3px 1px #e08a82;
}

form label {
  padding-top: 2px;
  line-height: 20px;
  color: #232426;
}

.parent {
  align-self: flex-start;
  padding: 0 8px 0 10px;
  border: 1px solid #7c7e88;
  border-radius: 12px;
  background: #f2f2f2;
  font-weight: 700;
  line-height: 23px;
  color: #7c7e88;
}

.check-row {
  display: flex;
  align-items: center;
  gap: 10px;
  margin: 12px 0 8px;
}

.check-row label {
  color: #7c7e88;
}

.check-row input {
  appearance: none;
  width: 14px;
  height: 14px;
  margin: 2px 0 0;
  border: 1px solid #b0b0b0;
  border-radius: 3px;
  background: linear-gradient(#ececec, #dcdcdc);
}

#name {
  height: 37px;
  padding: 0 3px;
  border: 1px solid #6d707c;
  font: inherit;
  color: #404552;
}

.required {
  display: flex;
  align-items: center;
  margin-top: 25px;
}

.required svg {
  width: 10px;
  height: 10px;
}

textarea {
  height: 87px;
  padding: 4px 3px;
  border: 1px solid #2d76b2;
  outline: 0;
  font: inherit;
  color: #404552;
}

.actions {
  display: flex;
  justify-content: flex-end;
  gap: 13px;
  margin-top: 25px;
}

.actions button {
  height: 41px;
  padding: 0 13px;
  border-radius: 4px;
  background: #3a5427;
  color: #fff;
  font-family: 'Liberation Sans', sans-serif;
  font-size: 19px;
}

/* taskbar */
.taskbar {
  display: flex;
  height: 50px;
  background: linear-gradient(to right, #2e060a, #220809 40%, #190909);
  color: #fff;
}

.start {
  display: grid;
  place-items: center;
  width: 60px;
}

.start svg {
  width: 20px;
  height: 20px;
}

.cortana {
  display: flex;
  align-items: center;
  width: 430px;
  padding: 0 17px 0 11px;
  background: #f2f2f2;
}

.ring {
  width: 28px;
  height: 28px;
  border: 4px solid #111;
  border-radius: 50%;
}

.cortana input {
  flex: 1;
  margin-left: 11px;
  padding: 0;
  border: 0;
  background: none;
  font: inherit;
  font-size: 17px;
}

.cortana input::placeholder {
  color: #333;
}

.cortana svg {
  width: 16px;
  height: 22px;
}

.task-view {
  display: grid;
  place-items: center;
  width: 60px;
  margin-right: 3px;
}

.task-view svg {
  width: 22px;
  height: 20px;
  fill: none;
  stroke: #fff;
}

.app {
  display: grid;
  place-items: center;
  width: 62px;
  position: relative;
}

.app svg {
  width: 30px;
  height: 30px;
}

.app.running::after {
  content: '';
  position: absolute;
  right: 5px;
  bottom: 0;
  left: 5px;
  height: 3px;
  background: #76b9ed;
}

.app.focused {
  background: #4c3737;
}

.app.focused::after {
  right: 0;
  left: 0;
}

.tray {
  display: flex;
  align-items: center;
  gap: 10px;
  margin: 0 5px 0 auto;
  padding-right: 24px;
  border-right: 1px solid #6e6262;
}

.tray svg {
  width: 20px;
  height: 20px;
  fill: none;
  stroke: #fff;
  stroke-width: 1.5;
}

.tray .battery {
  stroke-width: 1;
}

.tray .people {
  margin-right: 15px;
}

.tray .notes {
  width: 22px;
  height: 22px;
}

.clock {
  display: flex;
  flex-direction: column;
  align-items: center;
  margin: 0 13px 0 5px;
  font-size: 15px;
  line-height: 23px;
}
</style>
